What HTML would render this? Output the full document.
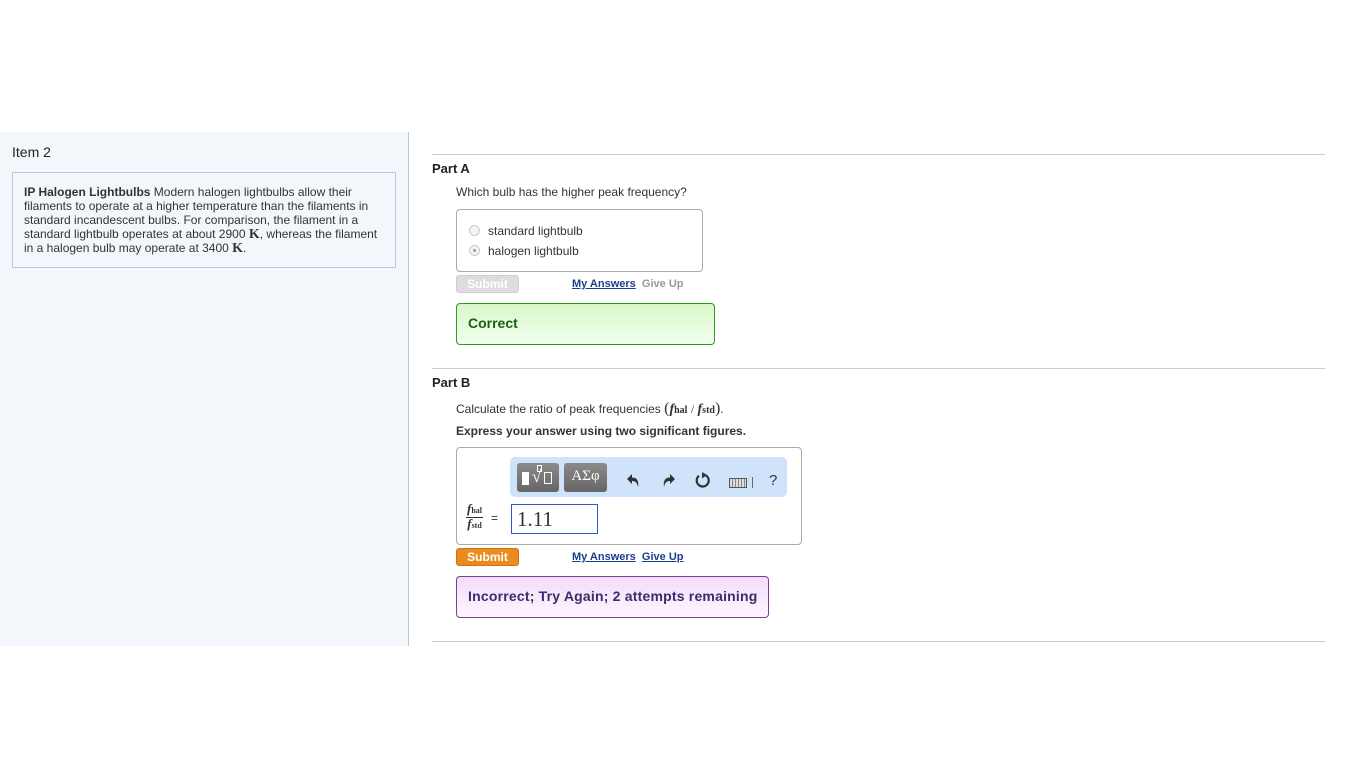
<!DOCTYPE html>
<html><head><meta charset="utf-8"><style>
*{margin:0;padding:0;box-sizing:border-box}
body{width:1366px;height:768px;background:#fff;font-family:"Liberation Sans",Arial,sans-serif;color:#333;position:relative;overflow:hidden}
.abs{position:absolute}
.left{left:0;top:132px;width:409px;height:514px;background:#f3f7fc;border-right:1px solid #b8c8dc}
.item{left:12px;top:144px;font-size:14px;color:#222}
.intro{left:12px;top:172px;width:384px;height:96px;border:1px solid #b8c8dc;padding:12px 11px;font-size:12px;line-height:14px;color:#333}
.K{font-family:"Liberation Serif",serif;font-weight:bold;font-size:14px;line-height:12px}
.hr{left:432px;width:893px;height:1px;background:#ccc}
.part{left:432px;font-size:13px;font-weight:bold;color:#222}
.q{font-size:12px;color:#333}
.box{border:1px solid #aaa;border-radius:4px;background:#fff}
.radio{display:inline-block;width:11px;height:11px;border-radius:50%;border:1px solid #ccc;background:#f3f3f3;vertical-align:-1px;margin-right:8px;position:relative}
.btn{font-size:12px;font-weight:bold;color:#fff;text-align:center;line-height:16px;border-radius:3px}
.lnk{font-size:11px;font-weight:bold}
.lnk a{color:#1a3d8f;text-decoration:underline}
.serif{font-family:"Liberation Serif",serif}
</style></head><body>
<div class="abs left"></div>
<div class="abs item">Item 2</div>
<div class="abs intro"><b>IP Halogen Lightbulbs</b> Modern halogen lightbulbs allow their filaments to operate at a higher temperature than the filaments in standard incandescent bulbs. For comparison, the filament in a standard lightbulb operates at about 2900 <span class="K">K</span>, whereas the filament in a halogen bulb may operate at 3400 <span class="K">K</span>.</div>

<div class="abs hr" style="top:154px"></div>
<div class="abs part" style="top:161px">Part A</div>
<div class="abs q" style="left:456px;top:185px">Which bulb has the higher peak frequency?</div>
<div class="abs box" style="left:456px;top:209px;width:247px;height:63px"></div>
<div class="abs q" style="left:469px;top:224px"><span class="radio"></span>standard lightbulb</div>
<div class="abs q" style="left:469px;top:244px"><span class="radio"><span style="position:absolute;left:3px;top:3px;width:3px;height:3px;border-radius:50%;background:#999"></span></span>halogen lightbulb</div>
<div class="abs btn" style="left:456px;top:275px;width:63px;height:18px;background:#ddd;border:1px solid #d0d0d0">Submit</div>
<div class="abs lnk" style="left:572px;top:278px"><a>My Answers</a> &nbsp;<span style="color:#999">Give Up</span></div>
<div class="abs" style="left:456px;top:303px;width:259px;height:42px;border:1px solid #2e9b1f;border-radius:4px;background:linear-gradient(#d8f8c8,#f2fff0);font-size:14px;font-weight:bold;color:#1e5e12;padding:11px 11px">Correct</div>

<div class="abs hr" style="top:368px"></div>
<div class="abs part" style="top:375px">Part B</div>
<div class="abs q" style="left:456px;top:400px">Calculate the ratio of peak frequencies <span class="serif" style="font-size:16px">(</span><i class="serif" style="font-size:14px;font-weight:bold">f</i><span class="serif" style="font-size:10px;font-weight:bold">hal</span> <span class="serif">/</span> <i class="serif" style="font-size:14px;font-weight:bold">f</i><span class="serif" style="font-size:10px;font-weight:bold">std</span><span class="serif" style="font-size:16px">)</span>.</div>
<div class="abs" style="left:456px;top:424px;font-size:12px;font-weight:bold;color:#333">Express your answer using two significant figures.</div>
<div class="abs box" style="left:456px;top:447px;width:346px;height:98px"></div>
<div class="abs" style="left:510px;top:457px;width:277px;height:40px;background:#cfe3fb;border-radius:5px"></div>
<div class="abs" style="left:517px;top:463px;width:42px;height:29px;background:linear-gradient(#8a8a8a,#666);border-radius:3px;color:#fff"><div class="abs" style="left:5px;top:9px;width:7px;height:13px;background:#fff"></div><span class="abs serif" style="left:15px;top:4px;font-size:17px">√</span><div class="abs" style="left:20px;top:2px;width:5px;height:7px;border:1px solid #fff"></div><div class="abs" style="left:27px;top:9px;width:8px;height:12px;border:1px solid #fff"></div></div>
<div class="abs serif" style="left:564px;top:463px;width:43px;height:29px;background:linear-gradient(#8a8a8a,#666);border-radius:3px;color:#fff;font-size:15px;text-align:center;line-height:26px">ΑΣφ</div>
<svg class="abs" style="left:626px;top:472px" width="16" height="16" viewBox="0 0 16 16"><path d="M6 2 L1 7 L6 12 V9 C9 9 11 10 12 15 C13 9 11 5.5 6 5.5 Z" fill="#333"/></svg>
<svg class="abs" style="left:660px;top:472px" width="16" height="16" viewBox="0 0 16 16"><path d="M10 2 L15 7 L10 12 V9 C7 9 5 10 4 15 C3 9 5 5.5 10 5.5 Z" fill="#333"/></svg>
<svg class="abs" style="left:694px;top:471px" width="18" height="18" viewBox="0 0 18 18"><path d="M11.5 4.2 A6 6 0 1 1 5 4.8" fill="none" stroke="#333" stroke-width="2.2"/><path d="M8 1 L13 4 L8 7.5 Z" fill="#333"/></svg>
<div class="abs" style="left:729px;top:478px;width:18px;height:10px;border:1px solid #555;background:repeating-linear-gradient(90deg,#ddd 0 2px,#888 2px 3px)"></div>
<div class="abs" style="left:752px;top:477px;width:1px;height:11px;background:#666"></div>
<div class="abs" style="left:769px;top:472px;font-size:15px;color:#333">?</div>
<div class="abs serif" style="left:466px;top:503px;font-size:11px;font-weight:bold;line-height:12px;text-align:center"><div style="border-bottom:1px solid #333;padding:0 1px"><i style="font-size:13px">f</i><span style="font-size:8px">hal</span></div><div><i style="font-size:13px">f</i><span style="font-size:8px">std</span></div></div>
<div class="abs" style="left:491px;top:511px;font-size:12px">=</div>
<div class="abs serif" style="left:511px;top:504px;width:87px;height:30px;border:1px solid #2e5cbf;font-size:21px;line-height:28px;padding-left:5px;color:#333">1.11</div>
<div class="abs btn" style="left:456px;top:548px;width:63px;height:18px;background:#ea8a1f;border:1px solid #d07512">Submit</div>
<div class="abs lnk" style="left:572px;top:551px"><a>My Answers</a> &nbsp;<a>Give Up</a></div>
<div class="abs" style="left:456px;top:576px;width:313px;height:42px;border:1px solid #7b3c9e;border-radius:4px;background:linear-gradient(#f3dcf8,#fdf6ff);font-size:14px;font-weight:bold;color:#3f2a6a;padding:11px 11px;white-space:nowrap;letter-spacing:0.2px">Incorrect; Try Again; 2 attempts remaining</div>
<div class="abs hr" style="top:641px"></div>
</body></html>
